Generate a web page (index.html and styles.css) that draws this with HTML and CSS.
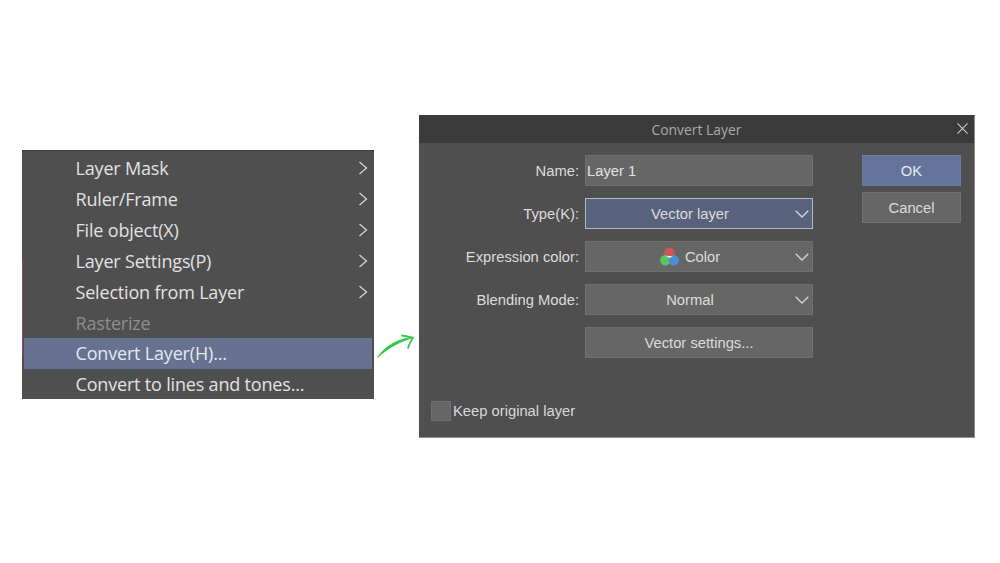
FILE: index.html
```html
<!DOCTYPE html>
<html lang="en">
<head>
<meta charset="utf-8">
<title>Convert Layer</title>
<link rel="stylesheet" href="styles.css">
</head>
<body>
<main class="stage">
  <ul class="menu">
    <li class="item">Layer Mask<svg class="sub" viewBox="0 0 10 14"><path d="M1.5 1 8.5 7 1.5 13"/></svg></li>
    <li class="item">Ruler/Frame<svg class="sub" viewBox="0 0 10 14"><path d="M1.5 1 8.5 7 1.5 13"/></svg></li>
    <li class="item">File object(X)<svg class="sub" viewBox="0 0 10 14"><path d="M1.5 1 8.5 7 1.5 13"/></svg></li>
    <li class="item">Layer Settings(P)<svg class="sub" viewBox="0 0 10 14"><path d="M1.5 1 8.5 7 1.5 13"/></svg></li>
    <li class="item">Selection from Layer<svg class="sub" viewBox="0 0 10 14"><path d="M1.5 1 8.5 7 1.5 13"/></svg></li>
    <li class="item disabled">Rasterize</li>
    <li class="item active">Convert Layer(H)...</li>
    <li class="item">Convert to lines and tones...</li>
  </ul>
  <svg class="arrow" viewBox="0 0 38 24"><path class="arrow-fill" d="M.5 23.500C7 13.500 20 4.500 36 3.500 24 7 12 13 .5 23.500Z"/><path class="arrow-line" d="M25 1.500C29 2 33 3 36 3.500 34 7 32 10 31 14"/></svg>
  <section class="dialog">
    <header class="titlebar">
      <span class="title">Convert Layer</span>
      <svg class="close" viewBox="0 0 12 12"><path d="M.5.5 11.500 11.500M11.500.5.5 11.500"/></svg>
    </header>
    <div class="content">
      <div class="form">
        <div class="row"><label class="label">Name:</label><div class="control input">Layer 1</div></div>
        <div class="row"><label class="label">Type(K):</label><div class="control select focused"><span class="value">Vector layer</span><svg class="chev" viewBox="0 0 14 8"><path d="M.7.7 7 7 13.300.7"/></svg></div></div>
        <div class="row"><label class="label">Expression color:</label><div class="control select"><span class="value"><svg class="dots" viewBox="0 0 18 18"><circle class="dot-r" cx="9" cy="5.500" r="5"/><circle class="dot-g" cx="5" cy="12.500" r="5"/><circle class="dot-b" cx="13" cy="12.500" r="5"/><path class="dot-w" d="M9 10.500 5.500 8.500 12.500 8.500Z"/></svg>Color</span><svg class="chev" viewBox="0 0 14 8"><path d="M.7.7 7 7 13.300.7"/></svg></div></div>
        <div class="row"><label class="label">Blending Mode:</label><div class="control select"><span class="value">Normal</span><svg class="chev" viewBox="0 0 14 8"><path d="M.7.7 7 7 13.300.7"/></svg></div></div>
        <div class="row"><span class="label"></span><div class="control button">Vector settings...</div></div>
      </div>
      <div class="actions">
        <div class="action primary">OK</div>
        <div class="action">Cancel</div>
      </div>
    </div>
    <div class="keep"><span class="checkbox"></span><span>Keep original layer</span></div>
  </section>
</main>
</body>
</html>
```
FILE: styles.css
```css
* { box-sizing: border-box; }
html, body { margin: 0; background: #fff; }
.stage {
  width: 1000px;
  height: 563px;
  padding-left: 22px;
  display: flex;
  align-items: flex-start;
  overflow: hidden;
}
.menu {
  list-style: none;
  margin: 150px 0 0;
  padding: 2px 2px 0;
  width: 352px;
  height: 249px;
  background: linear-gradient(#8c4a68, #8c4a68) 0 108px / 1px 98px no-repeat, #4f4f4f;
  border-top: 1px solid #3c3c3c;
  flex: none;
  overflow: hidden;
}
.item {
  height: 30.850px;
  padding: 0 4px 0 51.500px;
  display: flex;
  align-items: center;
  justify-content: space-between;
  color: #e2e2e2;
  font: 18px/1 "Open Sans", sans-serif;
  letter-spacing: -0.18px;
}
.disabled { color: #8e8e8e; }
.active { background: #667290; color: #e6e8ee; }
.sub { width: 10px; height: 14px; fill: none; stroke: #d4d4d4; stroke-width: 1.300; }
.arrow {
  width: 38px;
  height: 24px;
  margin: 334px 4px 0 3px;
  flex: none;
  fill: none;
}
.arrow-fill { fill: #35c94c; stroke: #35c94c; stroke-width: 1; stroke-linejoin: round; }
.arrow-line { stroke: #35c94c; stroke-width: 1.800; stroke-linecap: round; stroke-linejoin: round; fill: none; }
.dialog {
  width: 556px;
  height: 323px;
  margin-top: 115px;
  background: #4f4f4f;
  border-right: 1px solid #8a8a8a;
  border-bottom: 1px solid #8f8f8f;
  flex: none;
  display: flex;
  flex-direction: column;
  color: #dcdcdc;
  font: 14.750px/1 "Liberation Sans", sans-serif;
}
.titlebar {
  height: 28px;
  flex: none;
  background: #3b3b3b;
  display: flex;
  align-items: center;
  justify-content: center;
  position: relative;
}
.title { color: #a9a9a9; font: 13.900px/1 "Open Sans", sans-serif; margin-top: 1px; }
.close {
  position: absolute;
  right: 6px;
  top: 8px;
  width: 11px;
  height: 11px;
  fill: none;
  stroke: #cfcfcf;
  stroke-width: 1.100;
}
.content {
  display: flex;
  padding-top: 12px;
  gap: 49px;
}
.form { display: flex; flex-direction: column; gap: 12px; width: 394px; flex: none; }
.row { display: flex; align-items: center; gap: 6px; height: 31px; }
.label { width: 160px; flex: none; text-align: right; color: #dcdcdc; padding-top: 1px; }
.control {
  width: 228px;
  height: 31px;
  flex: none;
  background: #666;
  border: 1px solid #6f6f6f;
  display: flex;
  align-items: center;
  padding-top: 1px;
}
.input { padding-left: 1px; color: #e2e2e2; }
.select { position: relative; justify-content: center; padding-right: 18px; }
.button { justify-content: center; }
.focused { background: #59627c; border-color: #b4b8c4; }
.value { display: flex; align-items: center; gap: 6px; }
.chev {
  position: absolute;
  right: 3px;
  top: 11px;
  width: 14px;
  height: 8px;
  fill: none;
  stroke: #d6d6d6;
  stroke-width: 1.300;
}
.dots { width: 19px; height: 19px; flex: none; margin-top: -1px; }
.dot-r { fill: #d05452; }
.dot-g { fill: #5ac45e; }
.dot-b { fill: #4a8ed6; }
.dot-w { fill: #ece8e8; }
.actions { display: flex; flex-direction: column; gap: 6px; width: 99px; flex: none; }
.action {
  height: 31px;
  background: #666;
  border: 1px solid #707070;
  display: flex;
  align-items: center;
  justify-content: center;
  padding-top: 1px;
}
.primary { background: #647399; border-color: #6b7a9f; color: #e8eaf0; }
.keep {
  display: flex;
  align-items: center;
  gap: 2px;
  margin-top: 43px;
  padding-left: 12px;
  color: #d8d8d8;
}
.checkbox { width: 20px; height: 20px; background: #666; border: 1px solid #6f6f6f; flex: none; }
```
